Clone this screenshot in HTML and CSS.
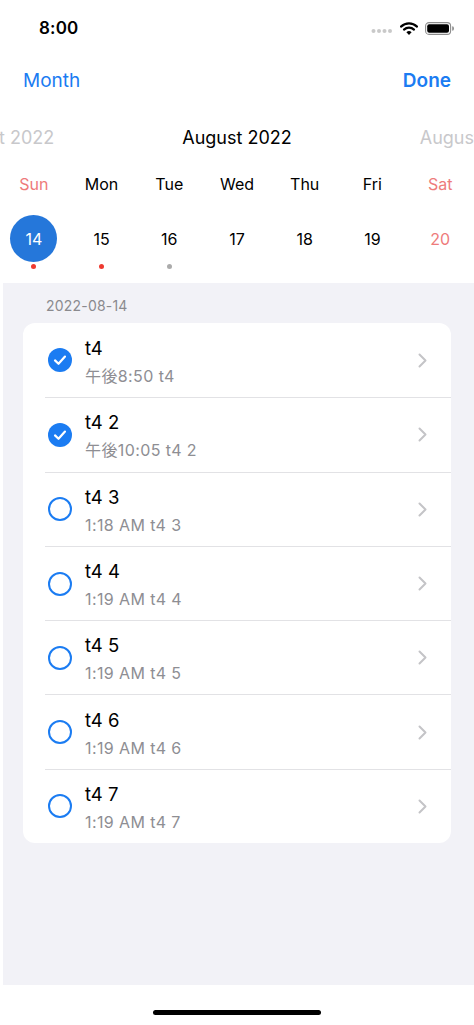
FILE: index.html
```html
<!DOCTYPE html>
<html>
<head>
  <title>Calendar</title>
  <link rel="stylesheet" href="styles.css">
</head>
<body>
  <div class="status-bar">
    <span class="time">8:00</span>
    <div class="status-icons">
      <svg width="22" height="6" viewBox="0 0 22 6">
        <circle cx="2.5" cy="3" r="2" fill="#c9c9c9"/>
        <circle cx="8" cy="3" r="2" fill="#c9c9c9"/>
        <circle cx="13.5" cy="3" r="2" fill="#c9c9c9"/>
        <circle cx="19" cy="3" r="2" fill="#c9c9c9"/>
      </svg>
      <svg width="18" height="13" viewBox="0 0 18 13">
        <path d="M1 4.6 A11.5 11.5 0 0 1 17 4.6" fill="none" stroke="#000" stroke-width="2.2" stroke-linecap="round"/>
        <path d="M4 7.6 A7.2 7.2 0 0 1 14 7.6" fill="none" stroke="#000" stroke-width="2.2" stroke-linecap="round"/>
        <path d="M6.4 10.3 L9 13 L11.6 10.3 A3.6 3.6 0 0 0 6.4 10.3 Z" fill="#000"/>
      </svg>
      <svg width="29" height="13" viewBox="0 0 29 13">
        <rect x="0.6" y="0.6" width="25" height="11.8" rx="3.4" fill="none" stroke="#000" stroke-width="1.1" opacity="0.45"/>
        <rect x="2.2" y="2.2" width="21.8" height="8.6" rx="2" fill="#000"/>
        <path d="M27.2 4.3 a1.8 2.2 0 0 1 0 4.4 Z" fill="#000" opacity="0.45"/>
      </svg>
    </div>
  </div>

  <div class="nav-bar">
    <span class="nav-btn">Month</span>
    <span class="nav-btn nav-done">Done</span>
  </div>

  <div class="month-strip">
    <span class="month-label faded">August 2022</span>
    <span class="month-label">August 2022</span>
    <span class="month-label faded">August 2022</span>
  </div>

  <div class="week-row">
    <span class="weekend">Sun</span>
    <span>Mon</span>
    <span>Tue</span>
    <span>Wed</span>
    <span>Thu</span>
    <span>Fri</span>
    <span class="weekend">Sat</span>
  </div>

  <div class="days-row">
    <div class="day">
      <span class="day-num selected">14</span>
      <span class="dot red"></span>
    </div>
    <div class="day">
      <span class="day-num">15</span>
      <span class="dot red"></span>
    </div>
    <div class="day">
      <span class="day-num">16</span>
      <span class="dot grey"></span>
    </div>
    <div class="day">
      <span class="day-num">17</span>
      <span class="dot"></span>
    </div>
    <div class="day">
      <span class="day-num">18</span>
      <span class="dot"></span>
    </div>
    <div class="day">
      <span class="day-num">19</span>
      <span class="dot"></span>
    </div>
    <div class="day">
      <span class="day-num weekend">20</span>
      <span class="dot"></span>
    </div>
  </div>

  <div class="content">
    <div class="section-title">2022-08-14</div>
    <div class="card">
      <div class="row">
        <span class="check done"><svg width="24" height="24" viewBox="0 0 24 24"><circle cx="12" cy="12" r="12" fill="#1b7cf2"/><path d="M7 12.4 L10.5 15.8 L17 8.6" fill="none" stroke="#fff" stroke-width="2.2" stroke-linecap="round" stroke-linejoin="round"/></svg></span>
        <div class="row-text">
          <div class="row-title">t4</div>
          <div class="row-sub">午後8:50 t4</div>
        </div>
        <span class="chevron"><svg width="9" height="15" viewBox="0 0 9 15"><path d="M1.5 1.5 L7.5 7.5 L1.5 13.5" fill="none" stroke="#c4c4c7" stroke-width="2" stroke-linecap="round" stroke-linejoin="round"/></svg></span>
      </div>
      <div class="row">
        <span class="check done"><svg width="24" height="24" viewBox="0 0 24 24"><circle cx="12" cy="12" r="12" fill="#1b7cf2"/><path d="M7 12.4 L10.5 15.8 L17 8.6" fill="none" stroke="#fff" stroke-width="2.2" stroke-linecap="round" stroke-linejoin="round"/></svg></span>
        <div class="row-text">
          <div class="row-title">t4 2</div>
          <div class="row-sub">午後10:05 t4 2</div>
        </div>
        <span class="chevron"><svg width="9" height="15" viewBox="0 0 9 15"><path d="M1.5 1.5 L7.5 7.5 L1.5 13.5" fill="none" stroke="#c4c4c7" stroke-width="2" stroke-linecap="round" stroke-linejoin="round"/></svg></span>
      </div>
      <div class="row">
        <span class="check"></span>
        <div class="row-text">
          <div class="row-title">t4 3</div>
          <div class="row-sub">1:18 AM t4 3</div>
        </div>
        <span class="chevron"><svg width="9" height="15" viewBox="0 0 9 15"><path d="M1.5 1.5 L7.5 7.5 L1.5 13.5" fill="none" stroke="#c4c4c7" stroke-width="2" stroke-linecap="round" stroke-linejoin="round"/></svg></span>
      </div>
      <div class="row">
        <span class="check"></span>
        <div class="row-text">
          <div class="row-title">t4 4</div>
          <div class="row-sub">1:19 AM t4 4</div>
        </div>
        <span class="chevron"><svg width="9" height="15" viewBox="0 0 9 15"><path d="M1.5 1.5 L7.5 7.5 L1.5 13.5" fill="none" stroke="#c4c4c7" stroke-width="2" stroke-linecap="round" stroke-linejoin="round"/></svg></span>
      </div>
      <div class="row">
        <span class="check"></span>
        <div class="row-text">
          <div class="row-title">t4 5</div>
          <div class="row-sub">1:19 AM t4 5</div>
        </div>
        <span class="chevron"><svg width="9" height="15" viewBox="0 0 9 15"><path d="M1.5 1.5 L7.5 7.5 L1.5 13.5" fill="none" stroke="#c4c4c7" stroke-width="2" stroke-linecap="round" stroke-linejoin="round"/></svg></span>
      </div>
      <div class="row">
        <span class="check"></span>
        <div class="row-text">
          <div class="row-title">t4 6</div>
          <div class="row-sub">1:19 AM t4 6</div>
        </div>
        <span class="chevron"><svg width="9" height="15" viewBox="0 0 9 15"><path d="M1.5 1.5 L7.5 7.5 L1.5 13.5" fill="none" stroke="#c4c4c7" stroke-width="2" stroke-linecap="round" stroke-linejoin="round"/></svg></span>
      </div>
      <div class="row">
        <span class="check"></span>
        <div class="row-text">
          <div class="row-title">t4 7</div>
          <div class="row-sub">1:19 AM t4 7</div>
        </div>
        <span class="chevron"><svg width="9" height="15" viewBox="0 0 9 15"><path d="M1.5 1.5 L7.5 7.5 L1.5 13.5" fill="none" stroke="#c4c4c7" stroke-width="2" stroke-linecap="round" stroke-linejoin="round"/></svg></span>
      </div>
    </div>
  </div>

  <div class="home-area">
    <span class="home-indicator"></span>
  </div>
</body>
</html>
```

FILE: styles.css
```css
body {
  font-family: Inter, "Noto Sans CJK JP", sans-serif;
  margin: 0;
  height: 1025px;
  display: flex;
  flex-direction: column;
  background-color: #fff;
  color: #000;
  overflow: hidden;
}
.status-bar {
  height: 56px;
  display: flex;
  align-items: center;
  justify-content: space-between;
  padding: 0 20px 0 39px;
  flex-shrink: 0;
}
.time {
  font-size: 17px;
  font-weight: 600;
  letter-spacing: 0.2px;
}
.status-icons {
  display: flex;
  align-items: center;
  gap: 7px;
}
.status-icons svg:first-child {
  margin-top: 6px;
}
.nav-bar {
  height: 48px;
  display: flex;
  align-items: center;
  justify-content: space-between;
  padding: 0 23px;
  flex-shrink: 0;
}
.nav-btn {
  font-size: 19px;
  color: #1b7cf2;
}
.nav-done {
  font-weight: 600;
}
.month-strip {
  height: 66px;
  display: flex;
  align-items: center;
  justify-content: center;
  gap: 128px;
  overflow: hidden;
  white-space: nowrap;
  flex-shrink: 0;
}
.month-label {
  font-size: 18px;
  flex-shrink: 0;
}
.month-label.faded {
  color: #c8c8cb;
}
.week-row {
  height: 28px;
  display: grid;
  grid-template-columns: repeat(7, 1fr);
  align-items: center;
  text-align: center;
  font-size: 16px;
  flex-shrink: 0;
}
.weekend {
  color: #ee7b7b;
}
.days-row {
  display: grid;
  grid-template-columns: repeat(7, 1fr);
  padding: 17px 0 14px;
  flex-shrink: 0;
}
.day {
  display: flex;
  flex-direction: column;
  align-items: center;
}
.day-num {
  width: 47px;
  height: 47px;
  border-radius: 50%;
  display: flex;
  align-items: center;
  justify-content: center;
  font-size: 16px;
}
.day-num.selected {
  background-color: #2577da;
  color: #fff;
}
.dot {
  width: 5px;
  height: 5px;
  border-radius: 50%;
  margin-top: 2px;
}
.dot.red {
  background-color: #ee3a30;
}
.dot.grey {
  background-color: #ababab;
}
.content {
  flex: 1;
  background-color: #f2f2f7;
  margin-left: 3px;
  padding: 0 23px 0 20px;
}
.section-title {
  font-size: 14px;
  letter-spacing: 0.2px;
  color: #8a8a8e;
  line-height: 20px;
  padding: 13px 0 7px 23px;
}
.card {
  background-color: #fff;
  border-radius: 12px;
  overflow: hidden;
}
.row {
  height: 74.3px;
  box-sizing: border-box;
  margin-left: 22px;
  padding: 0 24px 0 3px;
  display: flex;
  align-items: center;
  border-top: 1px solid #e2e2e5;
}
.row:first-child {
  border-top: none;
}
.check {
  width: 24px;
  height: 24px;
  box-sizing: border-box;
  border: 2px solid #1b7cf2;
  border-radius: 50%;
  flex-shrink: 0;
  margin-right: 13px;
}
.check.done {
  border: none;
}
.check svg {
  display: block;
}
.row-text {
  flex: 1;
  display: flex;
  flex-direction: column;
  gap: 5px;
  padding-top: 2px;
}
.row-title {
  font-size: 18.5px;
  line-height: 24px;
}
.row-sub {
  font-size: 16px;
  letter-spacing: 0.4px;
  line-height: 22px;
  color: #8e8e93;
}
.chevron svg {
  display: block;
}
.home-area {
  height: 40px;
  display: flex;
  justify-content: center;
  align-items: flex-start;
  flex-shrink: 0;
}
.home-indicator {
  width: 168px;
  height: 5px;
  border-radius: 3px;
  background-color: #000;
  margin-top: 25px;
}
```
